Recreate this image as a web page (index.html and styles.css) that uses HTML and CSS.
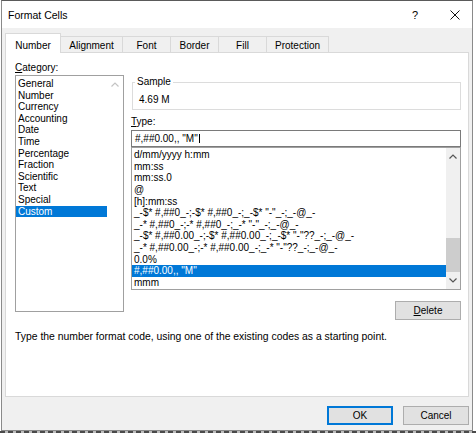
FILE: index.html
```html
<!DOCTYPE html>
<html>
<head>
<meta charset="utf-8">
<title>Format Cells</title>
<link rel="stylesheet" href="styles.css">
</head>
<body>
<div class="dialog">
  <div class="titlebar">
    <span class="title">Format Cells</span>
    <span class="help">?</span>
    <span class="close"><svg width="10" height="10" viewBox="0 0 10 10"><path d="M0.5 0.5L9.5 9.5M9.5 0.5L0.5 9.5" stroke="#111" stroke-width="1" fill="none"/></svg></span>
  </div>
  <div class="body">
    <div class="tabs">
      <div class="tab active t-number">Number</div>
      <div class="tab t-align">Alignment</div>
      <div class="tab t-font">Font</div>
      <div class="tab t-border">Border</div>
      <div class="tab t-fill">Fill</div>
      <div class="tab t-prot">Protection</div>
    </div>
    <div class="panel">
      <div class="cols">
        <div class="left">
          <div class="label"><u>C</u>ategory:</div>
          <div class="listbox cat">
            <div class="items">
              <div class="row">General</div>
              <div class="row">Number</div>
              <div class="row">Currency</div>
              <div class="row">Accounting</div>
              <div class="row">Date</div>
              <div class="row">Time</div>
              <div class="row">Percentage</div>
              <div class="row">Fraction</div>
              <div class="row">Scientific</div>
              <div class="row">Text</div>
              <div class="row">Special</div>
              <div class="row sel">Custom</div>
            </div>
            <div class="vscroll off">
              <div class="sbtn"><svg width="8" height="5" viewBox="0 0 8 5"><path d="M0.5 4.5L4 1L7.5 4.5" fill="none" stroke="#c4c4c4" stroke-width="1.2"/></svg></div>
            </div>
          </div>
        </div>
        <div class="right">
          <fieldset class="sample">
            <legend>Sample</legend>
            <div class="sample-val">4.69 M</div>
          </fieldset>
          <div class="label type-label"><u>T</u>ype:</div>
          <div class="input">#,##0.00,, "M"<span class="caret"></span></div>
          <div class="listbox fmt">
            <div class="items">
              <div class="row">d/mm/yyyy h:mm</div>
              <div class="row">mm:ss</div>
              <div class="row">mm:ss.0</div>
              <div class="row">@</div>
              <div class="row">[h]:mm:ss</div>
              <div class="row">_-$* #,##0_-;-$* #,##0_-;_-$* "-"_-;_-@_-</div>
              <div class="row">_-* #,##0_-;-* #,##0_-;_-* "-"_-;_-@_-</div>
              <div class="row">_-$* #,##0.00_-;-$* #,##0.00_-;_-$* "-"??_-;_-@_-</div>
              <div class="row">_-* #,##0.00_-;-* #,##0.00_-;_-* "-"??_-;_-@_-</div>
              <div class="row">0.0%</div>
              <div class="row sel">#,##0.00,, "M"</div>
              <div class="row">mmm</div>
            </div>
            <div class="vscroll">
              <div class="sbtn"><svg width="8" height="5" viewBox="0 0 8 5"><path d="M0.5 4.5L4 1L7.5 4.5" fill="none" stroke="#555" stroke-width="1.2"/></svg></div>
              <div class="thumb"></div>
              <div class="sbtn"><svg width="8" height="5" viewBox="0 0 8 5"><path d="M0.5 0.5L4 4L7.5 0.5" fill="none" stroke="#555" stroke-width="1.2"/></svg></div>
            </div>
          </div>
          <div class="actions">
            <button class="btn"><u>D</u>elete</button>
          </div>
        </div>
      </div>
      <p class="desc">Type the number format code, using one of the existing codes as a starting point.</p>
    </div>
    <div class="footer">
      <button class="btn default">OK</button>
      <button class="btn">Cancel</button>
    </div>
  </div>
</div>
<div class="behind"></div>
</body>
</html>
```
FILE: styles.css
```css
* { box-sizing: border-box; }
html, body { margin: 0; padding: 0; }
body {
  background: #ffffff;
  font-family: "Liberation Sans", Arial, sans-serif;
  font-size: 10px;
  color: #000;
  width: 476px;
  height: 433px;
  overflow: hidden;
}
.dialog {
  margin-left: 1px;
  width: 472px;
  height: 431px;
  border: 1px solid #8a8a8a;
  border-top-color: #5a5a5a;
  background: #f0f0f0;
  display: flex;
  flex-direction: column;
}
.titlebar {
  height: 27px;
  flex: none;
  background: #fff;
  display: flex;
  align-items: center;
  padding-left: 6px;
}
.title { flex: 1; font-size: 10.5px; }
.help { width: 16px; text-align: center; font-size: 11px; margin-right: 27px; }
.close { width: 10px; height: 10px; display: flex; margin-right: 12px; }
.body {
  flex: 1;
  padding: 5px 3px 0;
  display: flex;
  flex-direction: column;
}
.tabs {
  display: flex;
  align-items: flex-end;
  height: 20px;
  flex: none;
}
.tab {
  height: 17px;
  border: 1px solid #d9d9d9;
  border-bottom: none;
  margin-right: -1px;
  background: #f0f0f0;
  text-align: center;
  line-height: 13px;
  padding-top: 2px;
  white-space: nowrap;
}
.tab.active {
  height: 20px;
  background: #fff;
  padding-top: 5px;
  position: relative;
  z-index: 1;
}
.t-number { width: 56px; }
.t-align { width: 63px; }
.t-font { width: 49px; }
.t-border { width: 49px; }
.t-fill { width: 49px; }
.t-prot { width: 63px; }
.panel {
  margin-top: -1px;
  height: 345px;
  flex: none;
  background: #fff;
  border: 1px solid #d9d9d9;
  padding: 9px 0 0 9px;
}
.cols {
  display: grid;
  grid-template-columns: 109px 330px;
  column-gap: 7px;
  align-items: start;
}
.label { line-height: 12px; height: 12px; }
.listbox {
  border: 1px solid #a0a0a0;
  display: flex;
  background: #fff;
}
.listbox .items { flex: 1; overflow: hidden; min-width: 0; }
.cat { margin-top: 1px; height: 237px; }
.cat .items { padding-top: 2px; }
.row {
  height: 11.6px;
  line-height: 11.6px;
  padding-left: 2px;
  white-space: nowrap;
}
.row.sel { background: #0078d7; color: #fff; }
.vscroll {
  width: 14px;
  flex: none;
  background: #f0f0f0;
  display: flex;
  flex-direction: column;
}
.vscroll.off { width: 16px; background: #fff; }
.sbtn {
  height: 17px;
  flex: none;
  display: flex;
  align-items: center;
  justify-content: center;
}
.thumb {
  margin-top: auto;
  height: 34px;
  background: #cdcdcd;
}
.right { margin-top: 14px; }
.sample {
  margin: 0 0 0 1px;
  padding: 6px 6px 3px;
  border: 1px solid #dcdcdc;
  min-width: 0;
  width: 329px;
}
.sample legend {
  padding: 0 2px;
  margin-left: -4px;
  line-height: 12px;
}
.sample-val { line-height: 12px; }
.type-label { margin-top: 6px; }
.input {
  margin-top: 2px;
  height: 17px;
  border: 1px solid #7a7a7a;
  padding-left: 3px;
  line-height: 15px;
  white-space: nowrap;
  background: #fff;
}
.caret {
  display: inline-block;
  width: 1px;
  height: 9px;
  background: #000;
  vertical-align: -1px;
  margin-left: 1px;
}
.fmt { height: 143px; }
.fmt .items { padding-top: 1.3px; }
.actions {
  display: flex;
  justify-content: flex-end;
  margin-top: 11px;
}
.btn {
  height: 19px;
  width: 66px;
  background: #e1e1e1;
  border: 1px solid #adadad;
  font: inherit;
  color: #000;
  padding: 0;
  line-height: 17px;
}
.btn.default { border: 2px solid #0078d7; line-height: 15px; }
.desc { margin: 11px 0 0; line-height: 12px; font-size: 10.4px; }
.footer {
  display: flex;
  justify-content: flex-end;
  gap: 10px;
  margin-top: 9px;
}
.behind {
  height: 2px;
  background: repeating-linear-gradient(90deg, #4a4a4a 0 5px, #bcbcbc 5px 8px);
}
```
